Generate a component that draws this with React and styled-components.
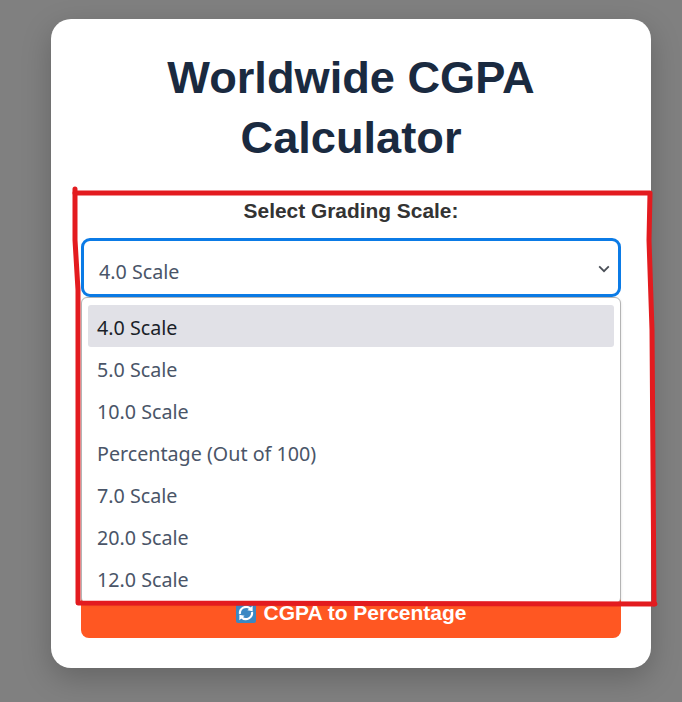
import styled, { createGlobalStyle } from "styled-components";

const opciones = [
  "4.0 Scale",
  "5.0 Scale",
  "10.0 Scale",
  "Percentage (Out of 100)",
  "7.0 Scale",
  "20.0 Scale",
  "12.0 Scale",
];

export default function App() {
  return (
    <>
      <GlobalStyle />
      <Card>
        <Title>Worldwide CGPA Calculator</Title>
        <Label>Select Grading Scale:</Label>
        <SelectWrap>
          <SelectBox>
            <span>4.0 Scale</span>
            <Chevron viewBox="0 0 12 8">
              <path d="M1.2 1.4 6 6.2l4.8-4.8" />
            </Chevron>
          </SelectBox>
          <Dropdown>
            {opciones.map((o, i) => (
              <Opcion key={o} $activa={i === 0}>
                {o}
              </Opcion>
            ))}
          </Dropdown>
        </SelectWrap>
        <ConvertButton>
          <EmojiIcon viewBox="0 0 20 20">
            <rect className="fondo" width="20" height="20" rx="2" />
            <path d="M4 11A6.2 6.2 0 0 1 14.2 5.4" />
            <path d="M16 9A6.2 6.2 0 0 1 5.8 14.6" />
            <polygon points="16.6,2.8 16.6,8.2 11.4,7.2" className="punta" />
            <polygon points="3.4,17.2 3.4,11.8 8.6,12.8" className="punta" />
          </EmojiIcon>
          CGPA to Percentage
        </ConvertButton>
      </Card>
      {/* anotacion a mano encima de la captura */}
      <Annotation viewBox="0 0 682 702">
        <path d="M75 189 L75 240 L78 290 L78 603 L655 604" />
        <path d="M75 193 L650 193 L649 240 L652 330 L654 604" />
      </Annotation>
    </>
  );
}

const GlobalStyle = createGlobalStyle`
  html, body {
    margin: 0;
    height: 702px;
    overflow: hidden;
    background: #808080;
    font-family: "Liberation Sans", Arial, sans-serif;
  }
  #root { position: relative; height: 702px; padding-top: 19px; box-sizing: border-box; }
`;

const Card = styled.div`
  box-sizing: border-box;
  width: 600px;
  height: 649px;
  margin-left: 51px;
  padding: 29px 30px 30px;
  background: #fff;
  border-radius: 20px;
  box-shadow: 0 10px 30px rgba(0, 0, 0, 0.22);
  text-align: center;
`;

const Title = styled.h1`
  margin: 0 0 33px;
  padding: 0 60px;
  font-size: 45.2px;
  line-height: 60px;
  font-weight: 700;
  color: #1a2a40;
`;

const Label = styled.div`
  margin-bottom: 17px;
  font-size: 20.9px;
  line-height: 20px;
  font-weight: 700;
  color: #333;
`;

const SelectWrap = styled.div`
  position: relative;
  height: 59px;
`;

const SelectBox = styled.div`
  box-sizing: border-box;
  height: 59px;
  display: flex;
  align-items: center;
  justify-content: space-between;
  padding: 7px 8px 0 15px;
  border: 3px solid #0b7be6;
  border-radius: 9px;
  background: #fff;
  font-family: "Noto Sans", sans-serif;
  font-size: 19.7px;
  color: #4a5568;
`;

const Chevron = styled.svg`
  width: 12px;
  height: 8px;
  margin-bottom: 5px;
  fill: none;
  stroke: #4a4f57;
  stroke-width: 1.8;
`;

const Dropdown = styled.div`
  position: absolute;
  top: 59px;
  left: 0;
  right: 0;
  box-sizing: border-box;
  height: 307px;
  padding: 7px 6px 0;
  background: #fff;
  border: 1px solid #b4b4b4;
  border-radius: 6px;
  box-shadow: 0 1px 3px rgba(0, 0, 0, 0.12);
  text-align: left;
`;

const Opcion = styled.div`
  height: 42px;
  line-height: 45px;
  padding-left: 9px;
  border-radius: 3px;
  background: ${({ $activa }) => ($activa ? "#e1e1e7" : "transparent")};
  font-family: "Noto Sans", sans-serif;
  font-size: 19.7px;
  color: ${({ $activa }) => ($activa ? "#1a1f29" : "#4a5568")};
`;

const ConvertButton = styled.div`
  height: 50px;
  margin-top: 291px;
  display: flex;
  align-items: center;
  justify-content: center;
  gap: 6px;
  border-radius: 8px;
  background: #ff5722;
  color: #fff;
  font-size: 21px;
  font-weight: 700;
`;

const EmojiIcon = styled.svg`
  width: 22px;
  height: 20px;
  fill: none;
  stroke: #fff;
  stroke-width: 2.2;
  .fondo { fill: #3b88c3; stroke: none; }
  .punta { fill: #fff; stroke: none; }
`;

const Annotation = styled.svg`
  position: absolute;
  top: 0;
  left: 0;
  width: 682px;
  height: 702px;
  fill: none;
  stroke: #e31b1f;
  stroke-width: 5;
  stroke-linejoin: round;
  stroke-linecap: round;
  pointer-events: none;
`;
